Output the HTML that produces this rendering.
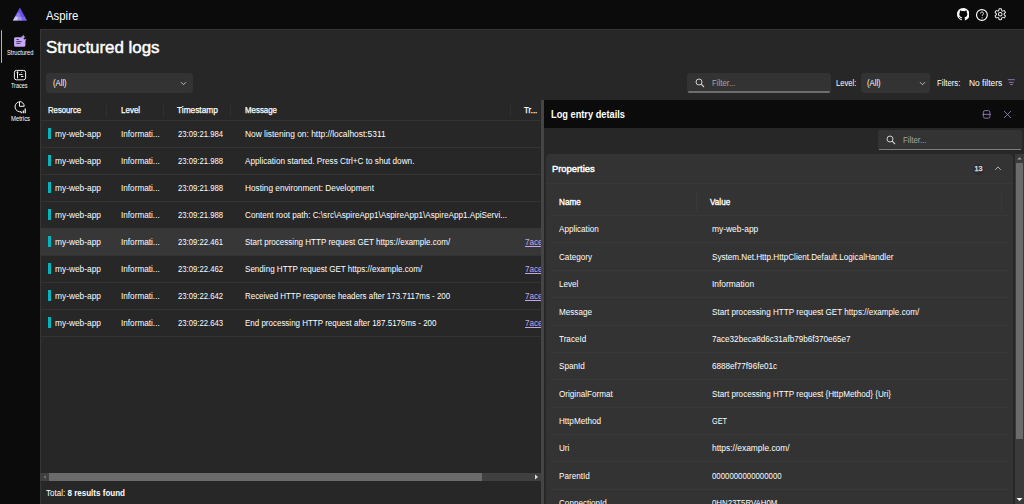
<!DOCTYPE html>
<html><head><meta charset="utf-8"><style>
html,body{margin:0;padding:0;}
body{width:1024px;height:504px;overflow:hidden;position:relative;background:#272727;font-family:"Liberation Sans",sans-serif;}
.r{position:absolute;}
.t{position:absolute;white-space:nowrap;}
</style></head><body>
<div class="r" style="left:0px;top:0px;width:1024px;height:29px;background:#0b0b0b;"></div>
<div class="r" style="left:0px;top:29px;width:40px;height:475px;background:#0b0b0b;"></div>
<div class="r" style="left:40px;top:29px;width:984px;height:475px;background:#272727;box-sizing:border-box;border-top:1px solid #363636;border-left:1px solid #363636"></div>
<svg class="r" style="left:12px;top:7px" width="16" height="15" viewBox="0 0 16 15"><polygon points="7.90,0.80 10.67,5.90 5.13,5.90" fill="#6a4ef2" stroke="#6a4ef2" stroke-width="0.3" stroke-linejoin="round"/><polygon points="5.13,5.90 7.90,5.90 9.46,9.40 3.23,9.40" fill="#8f78f3" stroke="#8f78f3" stroke-width="0.3" stroke-linejoin="round"/><polygon points="7.90,5.90 10.67,5.90 12.57,9.40 9.46,9.40" fill="#6c52f0" stroke="#6c52f0" stroke-width="0.3" stroke-linejoin="round"/><polygon points="3.23,9.40 6.34,9.40 5.60,13.50 1.00,13.50" fill="#d2c6fb" stroke="#d2c6fb" stroke-width="0.3" stroke-linejoin="round"/><polygon points="6.34,9.40 9.46,9.40 10.20,13.50 5.60,13.50" fill="#a592f5" stroke="#a592f5" stroke-width="0.3" stroke-linejoin="round"/><polygon points="9.46,9.40 12.57,9.40 14.80,13.50 10.20,13.50" fill="#7b63f1" stroke="#7b63f1" stroke-width="0.3" stroke-linejoin="round"/></svg>
<div class="t" style="left:46.40px;top:9.50px;font-size:12.4px;line-height:12.4px;color:#ffffff;font-weight:400;transform:scaleX(0.9188);transform-origin:0 0;">Aspire</div>
<svg class="r" style="left:956.6px;top:8.4px" width="12.6" height="12.6" viewBox="0 0 16 16"><path fill="#fff" d="M8 0C3.58 0 0 3.58 0 8c0 3.54 2.29 6.53 5.47 7.59.4.07.55-.17.55-.38 0-.19-.01-.82-.01-1.49-2.01.37-2.53-.49-2.69-.94-.09-.23-.48-.94-.82-1.13-.28-.15-.68-.52-.01-.53.63-.01 1.08.58 1.23.82.72 1.21 1.87.87 2.33.66.07-.52.28-.87.51-1.07-1.78-.2-3.640-.89-3.64-3.95 0-.87.31-1.590.82-2.15-.08-.2-.36-1.02.08-2.12 0 0 .67-.21 2.2.82.64-.18 1.32-.27 2-.27.68 0 1.36.09 2 .27 1.53-1.04 2.2-.82 2.2-.82.44 1.1.16 1.92.08 2.12.51.56.82 1.27.82 2.15 0 3.07-1.87 3.75-3.65 3.95.29.25.54.73.54 1.48 0 1.07-.01 1.93-.01 2.2 0 .21.15.46.55.38A8.013 8.013 0 0016 8c0-4.42-3.58-8-8-8z"/></svg>
<svg class="r" style="left:975px;top:7.8px" width="14" height="14" viewBox="0 0 14 14"><circle cx="6.9" cy="7" r="5.4" fill="none" stroke="#fff" stroke-width="1.15"/><path d="M5.5 5.5c0-.9.7-1.5 1.5-1.5s1.5.6 1.5 1.5c0 1-1.3 1.1-1.3 2.3" fill="none" stroke="#fff" stroke-width="0.9"/><circle cx="7.15" cy="9.8" r=".6" fill="#fff"/></svg>
<svg class="r" style="left:993.3px;top:7.4px" width="14.5" height="14.5" viewBox="0 0 24 24"><path fill="#fff" d="M12.012 2.25c.734.008 1.465.093 2.182.253a.75.75 0 0 1 .582.649l.17 1.527a1.384 1.384 0 0 0 1.927 1.116l1.401-.615a.75.75 0 0 1 .85.174 9.792 9.792 0 0 1 2.204 3.792.75.75 0 0 1-.271.825l-1.242.916a1.381 1.381 0 0 0 0 2.226l1.243.915a.75.75 0 0 1 .272.826 9.797 9.797 0 0 1-2.204 3.792.75.75 0 0 1-.848.175l-1.407-.617a1.38 1.38 0 0 0-1.926 1.114l-.169 1.526a.75.75 0 0 1-.572.647 9.518 9.518 0 0 1-4.406 0 .75.75 0 0 1-.572-.647l-.168-1.524a1.382 1.382 0 0 0-1.926-1.11l-1.406.616a.75.75 0 0 1-.849-.175 9.798 9.798 0 0 1-2.204-3.796.75.75 0 0 1 .272-.826l1.243-.916a1.38 1.38 0 0 0 0-2.226l-1.243-.914a.75.75 0 0 1-.271-.826 9.793 9.793 0 0 1 2.204-3.792.75.75 0 0 1 .85-.174l1.4.615a1.387 1.387 0 0 0 1.93-1.118l.17-1.526a.75.75 0 0 1 .583-.65c.717-.159 1.45-.243 2.201-.252Zm0 1.5a9.135 9.135 0 0 0-1.354.117l-.109.977A2.886 2.886 0 0 1 6.525 7.17l-.898-.394a8.293 8.293 0 0 0-1.348 2.317l.798.587a2.881 2.881 0 0 1 0 4.643l-.799.588c.32.842.776 1.626 1.348 2.322l.905-.397a2.882 2.882 0 0 1 4.017 2.318l.11.984c.889.15 1.798.15 2.687 0l.11-.984a2.881 2.881 0 0 1 4.018-2.322l.905.396a8.296 8.296 0 0 0 1.347-2.318l-.798-.588a2.881 2.881 0 0 1 0-4.643l.796-.587a8.293 8.293 0 0 0-1.348-2.317l-.896.393a2.884 2.884 0 0 1-4.023-2.324l-.11-.976a8.988 8.988 0 0 0-1.333-.117ZM12 8.25a3.75 3.75 0 1 1 0 7.5 3.75 3.75 0 0 1 0-7.5Zm0 1.5a2.25 2.25 0 1 0 0 4.5 2.25 2.25 0 0 0 0-4.5Z"/></svg>
<div class="r" style="left:1px;top:29.5px;width:1.4px;height:33.2px;background:#c2a2f0;border-radius:1px"></div>
<svg class="r" style="left:13px;top:34px" width="14" height="14" viewBox="0 0 14 14">
<path d="M2.6 3.2h6.3l3.5 3.4v4.6c0 .9-.6 1.5-1.5 1.5H2.6c-.9 0-1.5-.6-1.5-1.5V4.7c0-.9.6-1.5 1.5-1.5z" fill="#c7a6f5"/>
<path d="M3.4 5.5h2.6M3.4 7.6h5.3M3.4 9.4h3.9" stroke="#3b2f52" stroke-width="0.9"/>
<path d="M10.2 0.6l.65 1.75 1.75.65-1.75.65-.65 1.75-.65-1.75-1.75-.65 1.75-.65z" fill="#c7a6f5"/>
<path d="M12.2 4.4l.4 1 1 .4-1 .4-.4 1-.4-1-1-.4 1-.4z" fill="#c7a6f5"/>
</svg>
<div class="t" style="left:6.80px;top:50.41px;font-size:6.6px;line-height:6.6px;color:#ffffff;font-weight:400;transform:scaleX(0.8671);transform-origin:0 0;">Structured</div>
<svg class="r" style="left:13px;top:69px" width="14" height="12" viewBox="0 0 14 12">
<rect x="1.4" y="1.4" width="11.2" height="9.4" rx="2" fill="none" stroke="#fff" stroke-width="0.95"/>
<path d="M4.5 2.6v6.8M6 5.6h3.6M8 7.5h2.4M8.6 3.2v.6" stroke="#fff" stroke-width="0.95" fill="none"/>
<circle cx="4.5" cy="3.4" r="0.9" fill="#fff"/>
</svg>
<div class="t" style="left:11.40px;top:83.21px;font-size:6.6px;line-height:6.6px;color:#ffffff;font-weight:400;transform:scaleX(0.8231);transform-origin:0 0;">Traces</div>
<svg class="r" style="left:13px;top:100px" width="14" height="14" viewBox="0 0 14 14">
<path d="M5.8 1.9A4.9 4.9 0 1 0 8.3 11.6" fill="none" stroke="#fff" stroke-width="0.95"/>
<path d="M6.5 1.5v4.8h4.7A4.8 4.8 0 0 0 6.5 1.5z" fill="none" stroke="#fff" stroke-width="0.95"/>
<path d="M8.3 13.2v-1.2M10.3 13.2v-2.6M12.2 13.2v-4.6" stroke="#fff" stroke-width="1.2"/>
</svg>
<div class="t" style="left:10.50px;top:116.41px;font-size:6.6px;line-height:6.6px;color:#ffffff;font-weight:400;transform:scaleX(0.8982);transform-origin:0 0;">Metrics</div>
<div class="t" style="left:46.40px;top:39.02px;font-size:16.4px;line-height:16.4px;color:#ffffff;font-weight:400;transform:scaleX(1.0299);transform-origin:0 0;-webkit-text-stroke:0.46px #ffffff;">Structured logs</div>
<div class="r" style="left:46px;top:73px;width:147px;height:20px;background:#333333;border-radius:3px"></div>
<div class="t" style="left:52.60px;top:78.80px;font-size:8.5px;line-height:8.5px;color:#ffffff;font-weight:400;transform:scaleX(0.9037);transform-origin:0 0;">(All)</div>
<svg class="r" style="left:180px;top:80.5px" width="7" height="5" viewBox="0 0 7 5"><path d="M1 1.2l2.5 2.5L6 1.2" fill="none" stroke="#ccc" stroke-width="0.9"/></svg>
<div class="r" style="left:687px;top:73px;width:144px;height:20px;background:#333333;border-radius:3px"></div>
<div class="r" style="left:688px;top:91px;width:142px;height:1.6px;background:#6e6e6e;border-radius:1px"></div>
<svg class="r" style="left:695px;top:78px" width="10" height="10" viewBox="0 0 10 10"><circle cx="4" cy="4" r="3" fill="none" stroke="#d0d0d0" stroke-width="1"/><path d="M6.2 6.2L9 9" stroke="#d0d0d0" stroke-width="1.1"/></svg>
<div class="t" style="left:711.50px;top:78.60px;font-size:8.5px;line-height:8.5px;color:#a6a6a6;font-weight:400;transform:scaleX(0.9173);transform-origin:0 0;">Filter...</div>
<div class="t" style="left:835.70px;top:78.80px;font-size:8.5px;line-height:8.5px;color:#ffffff;font-weight:400;transform:scaleX(0.8951);transform-origin:0 0;">Level:</div>
<div class="r" style="left:861px;top:73px;width:69px;height:20px;background:#333333;border-radius:3px"></div>
<div class="t" style="left:867.00px;top:78.80px;font-size:8.5px;line-height:8.5px;color:#ffffff;font-weight:400;transform:scaleX(0.9037);transform-origin:0 0;">(All)</div>
<svg class="r" style="left:919px;top:80.5px" width="7" height="5" viewBox="0 0 7 5"><path d="M1 1.2l2.5 2.5L6 1.2" fill="none" stroke="#ccc" stroke-width="0.9"/></svg>
<div class="t" style="left:936.60px;top:78.80px;font-size:8.5px;line-height:8.5px;color:#ffffff;font-weight:400;transform:scaleX(0.9176);transform-origin:0 0;">Filters:</div>
<div class="t" style="left:968.70px;top:78.80px;font-size:8.5px;line-height:8.5px;color:#ffffff;font-weight:400;transform:scaleX(0.9901);transform-origin:0 0;">No filters</div>
<svg class="r" style="left:1007px;top:78px" width="9" height="8" viewBox="0 0 9 8"><path d="M0.8 1.65h7M1.9 4.4h4.8M3 6.5h2.9" stroke="#8c75ad" stroke-width="0.95"/></svg>
<div class="t" style="left:48.20px;top:106.17px;font-size:8.9px;line-height:8.9px;color:#ffffff;font-weight:400;transform:scaleX(0.8716);transform-origin:0 0;-webkit-text-stroke:0.25px #ffffff;">Resource</div>
<div class="t" style="left:120.80px;top:106.17px;font-size:8.9px;line-height:8.9px;color:#ffffff;font-weight:400;transform:scaleX(0.9000);transform-origin:0 0;-webkit-text-stroke:0.25px #ffffff;">Level</div>
<div class="t" style="left:177.10px;top:106.17px;font-size:8.9px;line-height:8.9px;color:#ffffff;font-weight:400;transform:scaleX(0.9386);transform-origin:0 0;-webkit-text-stroke:0.25px #ffffff;">Timestamp</div>
<div class="t" style="left:244.80px;top:106.17px;font-size:8.9px;line-height:8.9px;color:#ffffff;font-weight:400;transform:scaleX(0.8888);transform-origin:0 0;-webkit-text-stroke:0.25px #ffffff;">Message</div>
<div class="t" style="left:523.70px;top:106.17px;font-size:8.9px;line-height:8.9px;color:#ffffff;font-weight:400;transform:scaleX(0.8869);transform-origin:0 0;-webkit-text-stroke:0.25px #ffffff;">Tr...</div>
<div class="r" style="left:106px;top:105px;width:1px;height:12px;background:#303030;"></div>
<div class="r" style="left:163px;top:105px;width:1px;height:12px;background:#303030;"></div>
<div class="r" style="left:230px;top:105px;width:1px;height:12px;background:#303030;"></div>
<div class="r" style="left:510px;top:105px;width:1px;height:12px;background:#303030;"></div>
<div class="r" style="left:40px;top:120px;width:501px;height:1px;background:#333333;"></div>
<div class="r" style="left:40px;top:147px;width:501px;height:1px;background:#333333;"></div>
<div class="r" style="left:48px;top:128px;width:3px;height:11px;background:#00b5bd;"></div>
<div class="t" style="left:54.60px;top:130.10px;font-size:8.5px;line-height:8.5px;color:#ffffff;font-weight:400;transform:scaleX(0.9836);transform-origin:0 0;">my-web-app</div>
<div class="t" style="left:120.80px;top:130.10px;font-size:8.5px;line-height:8.5px;color:#ffffff;font-weight:400;transform:scaleX(0.9638);transform-origin:0 0;">Informati...</div>
<div class="t" style="left:177.50px;top:130.10px;font-size:8.5px;line-height:8.5px;color:#ffffff;font-weight:400;transform:scaleX(0.9067);transform-origin:0 0;">23:09:21.984</div>
<div class="t" style="left:245.00px;top:130.10px;font-size:8.5px;line-height:8.5px;color:#ffffff;font-weight:400;transform:scaleX(0.9864);transform-origin:0 0;">Now listening on: http://localhost:5311</div>
<div class="r" style="left:40px;top:174px;width:501px;height:1px;background:#333333;"></div>
<div class="r" style="left:48px;top:155px;width:3px;height:11px;background:#00b5bd;"></div>
<div class="t" style="left:54.60px;top:157.10px;font-size:8.5px;line-height:8.5px;color:#ffffff;font-weight:400;transform:scaleX(0.9836);transform-origin:0 0;">my-web-app</div>
<div class="t" style="left:120.80px;top:157.10px;font-size:8.5px;line-height:8.5px;color:#ffffff;font-weight:400;transform:scaleX(0.9638);transform-origin:0 0;">Informati...</div>
<div class="t" style="left:177.50px;top:157.10px;font-size:8.5px;line-height:8.5px;color:#ffffff;font-weight:400;transform:scaleX(0.9067);transform-origin:0 0;">23:09:21.988</div>
<div class="t" style="left:245.00px;top:157.10px;font-size:8.5px;line-height:8.5px;color:#ffffff;font-weight:400;transform:scaleX(0.9626);transform-origin:0 0;">Application started. Press Ctrl+C to shut down.</div>
<div class="r" style="left:40px;top:201px;width:501px;height:1px;background:#333333;"></div>
<div class="r" style="left:48px;top:182px;width:3px;height:11px;background:#00b5bd;"></div>
<div class="t" style="left:54.60px;top:184.10px;font-size:8.5px;line-height:8.5px;color:#ffffff;font-weight:400;transform:scaleX(0.9836);transform-origin:0 0;">my-web-app</div>
<div class="t" style="left:120.80px;top:184.10px;font-size:8.5px;line-height:8.5px;color:#ffffff;font-weight:400;transform:scaleX(0.9638);transform-origin:0 0;">Informati...</div>
<div class="t" style="left:177.50px;top:184.10px;font-size:8.5px;line-height:8.5px;color:#ffffff;font-weight:400;transform:scaleX(0.9067);transform-origin:0 0;">23:09:21.988</div>
<div class="t" style="left:245.00px;top:184.10px;font-size:8.5px;line-height:8.5px;color:#ffffff;font-weight:400;transform:scaleX(0.9717);transform-origin:0 0;">Hosting environment: Development</div>
<div class="r" style="left:40px;top:228px;width:501px;height:1px;background:#333333;"></div>
<div class="r" style="left:48px;top:209px;width:3px;height:11px;background:#00b5bd;"></div>
<div class="t" style="left:54.60px;top:211.10px;font-size:8.5px;line-height:8.5px;color:#ffffff;font-weight:400;transform:scaleX(0.9836);transform-origin:0 0;">my-web-app</div>
<div class="t" style="left:120.80px;top:211.10px;font-size:8.5px;line-height:8.5px;color:#ffffff;font-weight:400;transform:scaleX(0.9638);transform-origin:0 0;">Informati...</div>
<div class="t" style="left:177.50px;top:211.10px;font-size:8.5px;line-height:8.5px;color:#ffffff;font-weight:400;transform:scaleX(0.9067);transform-origin:0 0;">23:09:21.988</div>
<div class="t" style="left:245.00px;top:211.10px;font-size:8.5px;line-height:8.5px;color:#ffffff;font-weight:400;transform:scaleX(0.9611);transform-origin:0 0;">Content root path: C:\src\AspireApp1\AspireApp1\AspireApp1.ApiServi...</div>
<div class="r" style="left:40px;top:228px;width:501px;height:27px;background:#373737;"></div>
<div class="r" style="left:40px;top:255px;width:501px;height:1px;background:#333333;"></div>
<div class="r" style="left:48px;top:236px;width:3px;height:11px;background:#00b5bd;"></div>
<div class="t" style="left:54.60px;top:238.10px;font-size:8.5px;line-height:8.5px;color:#ffffff;font-weight:400;transform:scaleX(0.9836);transform-origin:0 0;">my-web-app</div>
<div class="t" style="left:120.80px;top:238.10px;font-size:8.5px;line-height:8.5px;color:#ffffff;font-weight:400;transform:scaleX(0.9638);transform-origin:0 0;">Informati...</div>
<div class="t" style="left:177.50px;top:238.10px;font-size:8.5px;line-height:8.5px;color:#ffffff;font-weight:400;transform:scaleX(0.9067);transform-origin:0 0;">23:09:22.461</div>
<div class="t" style="left:245.00px;top:238.10px;font-size:8.5px;line-height:8.5px;color:#ffffff;font-weight:400;transform:scaleX(0.9456);transform-origin:0 0;">Start processing HTTP request GET https://example.com/</div>
<div class="r" style="left:520px;top:231px;width:21px;height:22px;overflow:hidden"><div class="t" style="left:4.70px;top:7.10px;font-size:8.5px;line-height:8.5px;color:#c3a5ec;font-weight:400;transform:scaleX(0.9500);transform-origin:0 0;text-decoration:underline;">7ace32beca8d6c31afb79b6f370e65e7</div></div>
<div class="r" style="left:40px;top:282px;width:501px;height:1px;background:#333333;"></div>
<div class="r" style="left:48px;top:263px;width:3px;height:11px;background:#00b5bd;"></div>
<div class="t" style="left:54.60px;top:265.10px;font-size:8.5px;line-height:8.5px;color:#ffffff;font-weight:400;transform:scaleX(0.9836);transform-origin:0 0;">my-web-app</div>
<div class="t" style="left:120.80px;top:265.10px;font-size:8.5px;line-height:8.5px;color:#ffffff;font-weight:400;transform:scaleX(0.9638);transform-origin:0 0;">Informati...</div>
<div class="t" style="left:177.50px;top:265.10px;font-size:8.5px;line-height:8.5px;color:#ffffff;font-weight:400;transform:scaleX(0.9067);transform-origin:0 0;">23:09:22.462</div>
<div class="t" style="left:245.00px;top:265.10px;font-size:8.5px;line-height:8.5px;color:#ffffff;font-weight:400;transform:scaleX(0.9493);transform-origin:0 0;">Sending HTTP request GET https://example.com/</div>
<div class="r" style="left:520px;top:258px;width:21px;height:22px;overflow:hidden"><div class="t" style="left:4.70px;top:7.10px;font-size:8.5px;line-height:8.5px;color:#c3a5ec;font-weight:400;transform:scaleX(0.9500);transform-origin:0 0;text-decoration:underline;">7ace32beca8d6c31afb79b6f370e65e7</div></div>
<div class="r" style="left:40px;top:309px;width:501px;height:1px;background:#333333;"></div>
<div class="r" style="left:48px;top:290px;width:3px;height:11px;background:#00b5bd;"></div>
<div class="t" style="left:54.60px;top:292.10px;font-size:8.5px;line-height:8.5px;color:#ffffff;font-weight:400;transform:scaleX(0.9836);transform-origin:0 0;">my-web-app</div>
<div class="t" style="left:120.80px;top:292.10px;font-size:8.5px;line-height:8.5px;color:#ffffff;font-weight:400;transform:scaleX(0.9638);transform-origin:0 0;">Informati...</div>
<div class="t" style="left:177.50px;top:292.10px;font-size:8.5px;line-height:8.5px;color:#ffffff;font-weight:400;transform:scaleX(0.9067);transform-origin:0 0;">23:09:22.642</div>
<div class="t" style="left:245.00px;top:292.10px;font-size:8.5px;line-height:8.5px;color:#ffffff;font-weight:400;transform:scaleX(0.9333);transform-origin:0 0;">Received HTTP response headers after 173.7117ms - 200</div>
<div class="r" style="left:520px;top:285px;width:21px;height:22px;overflow:hidden"><div class="t" style="left:4.70px;top:7.10px;font-size:8.5px;line-height:8.5px;color:#c3a5ec;font-weight:400;transform:scaleX(0.9500);transform-origin:0 0;text-decoration:underline;">7ace32beca8d6c31afb79b6f370e65e7</div></div>
<div class="r" style="left:40px;top:336px;width:501px;height:1px;background:#333333;"></div>
<div class="r" style="left:48px;top:317px;width:3px;height:11px;background:#00b5bd;"></div>
<div class="t" style="left:54.60px;top:319.10px;font-size:8.5px;line-height:8.5px;color:#ffffff;font-weight:400;transform:scaleX(0.9836);transform-origin:0 0;">my-web-app</div>
<div class="t" style="left:120.80px;top:319.10px;font-size:8.5px;line-height:8.5px;color:#ffffff;font-weight:400;transform:scaleX(0.9638);transform-origin:0 0;">Informati...</div>
<div class="t" style="left:177.50px;top:319.10px;font-size:8.5px;line-height:8.5px;color:#ffffff;font-weight:400;transform:scaleX(0.9067);transform-origin:0 0;">23:09:22.643</div>
<div class="t" style="left:245.00px;top:319.10px;font-size:8.5px;line-height:8.5px;color:#ffffff;font-weight:400;transform:scaleX(0.9389);transform-origin:0 0;">End processing HTTP request after 187.5176ms - 200</div>
<div class="r" style="left:520px;top:312px;width:21px;height:22px;overflow:hidden"><div class="t" style="left:4.70px;top:7.10px;font-size:8.5px;line-height:8.5px;color:#c3a5ec;font-weight:400;transform:scaleX(0.9500);transform-origin:0 0;text-decoration:underline;">7ace32beca8d6c31afb79b6f370e65e7</div></div>
<div class="r" style="left:40px;top:473px;width:501px;height:8px;background:#404040;"></div>
<div class="r" style="left:49px;top:473px;width:433px;height:8px;background:#6b6b6b;"></div>
<svg class="r" style="left:42px;top:474px" width="5" height="6" viewBox="0 0 5 6"><path d="M3.8 1.2v3.6L1.6 3z" fill="#7a7a7a"/></svg>
<svg class="r" style="left:534px;top:474px" width="5" height="6" viewBox="0 0 5 6"><path d="M1 0.5v5L4 3z" fill="#e0e0e0"/></svg>
<div class="t" style="left:46.25px;top:489.20px;font-size:8.5px;line-height:8.5px;color:#ffffff;font-weight:400;transform:scaleX(0.9450);transform-origin:0 0;">Total: <b>8 results found</b></div>
<div class="r" style="left:541px;top:100px;width:3px;height:404px;background:#454545;"></div>
<div class="r" style="left:544px;top:100px;width:480px;height:28px;background:#0b0b0b;"></div>
<div class="r" style="left:544px;top:128px;width:480px;height:376px;background:#272727;"></div>
<div class="t" style="left:550.90px;top:109.80px;font-size:10.4px;line-height:10.4px;color:#ffffff;font-weight:700;transform:scaleX(0.8892);transform-origin:0 0;">Log entry details</div>
<svg class="r" style="left:982px;top:109px" width="10" height="11" viewBox="0 0 10 11"><rect x="1.4" y="1.6" width="6.5" height="7.6" rx="1.6" fill="none" stroke="#967fbf" stroke-width="0.85"/><path d="M0.4 5.4h8.6" stroke="#967fbf" stroke-width="0.85"/></svg>
<svg class="r" style="left:1003px;top:110px" width="9" height="9" viewBox="0 0 9 9"><path d="M1 1l7 7M8 1l-7 7" stroke="#a68bd0" stroke-width="0.8"/></svg>
<div class="r" style="left:878px;top:130px;width:144px;height:20px;background:#333333;border-radius:3px"></div>
<div class="r" style="left:879px;top:149px;width:142px;height:1px;background:#7d7d7d;"></div>
<svg class="r" style="left:886px;top:135px" width="10" height="10" viewBox="0 0 10 10"><circle cx="4" cy="4" r="3" fill="none" stroke="#d0d0d0" stroke-width="1"/><path d="M6.2 6.2L9 9" stroke="#d0d0d0" stroke-width="1.1"/></svg>
<div class="t" style="left:902.60px;top:136.10px;font-size:8.5px;line-height:8.5px;color:#a6a6a6;font-weight:400;transform:scaleX(0.9173);transform-origin:0 0;">Filter...</div>
<div class="r" style="left:546px;top:154px;width:467px;height:360px;background:#333333;border-radius:4px"></div>
<div class="t" style="left:551.80px;top:164.12px;font-size:9.9px;line-height:9.9px;color:#ffffff;font-weight:400;transform:scaleX(0.9463);transform-origin:0 0;-webkit-text-stroke:0.45px #ffffff;">Properties</div>
<div class="r" style="left:973px;top:164.3px;width:10.5px;height:10.5px;background:#2c2c2c;border-radius:6px"></div>
<div class="t" style="left:974.40px;top:165.21px;font-size:7.2px;line-height:7.2px;color:#e6ecf5;font-weight:400;-webkit-text-stroke:0.25px #e6ecf5;letter-spacing:0.05px">13</div>
<svg class="r" style="left:994px;top:165px" width="8" height="6" viewBox="0 0 8 6"><path d="M1.2 4.9L4 1.9l2.8 3" fill="none" stroke="#cfcfcf" stroke-width="0.8"/></svg>
<div class="r" style="left:546px;top:183px;width:467px;height:1px;background:#383838;"></div>
<div class="t" style="left:558.50px;top:197.60px;font-size:8.5px;line-height:8.5px;color:#ffffff;font-weight:400;transform:scaleX(0.9657);transform-origin:0 0;-webkit-text-stroke:0.34px #ffffff;">Name</div>
<div class="t" style="left:710.20px;top:197.60px;font-size:8.5px;line-height:8.5px;color:#ffffff;font-weight:400;transform:scaleX(0.9571);transform-origin:0 0;-webkit-text-stroke:0.34px #ffffff;">Value</div>
<div class="r" style="left:696px;top:192px;width:1px;height:19px;background:#393939;"></div>
<div class="r" style="left:1001px;top:192px;width:1px;height:19px;background:#393939;"></div>
<div class="r" style="left:551px;top:215px;width:457px;height:1px;background:#393939;"></div>
<div class="t" style="left:559.20px;top:224.55px;font-size:8.5px;line-height:8.5px;color:#ffffff;font-weight:400;transform:scaleX(0.9550);transform-origin:0 0;">Application</div>
<div class="t" style="left:711.50px;top:224.55px;font-size:8.5px;line-height:8.5px;color:#ffffff;font-weight:400;transform:scaleX(0.9900);transform-origin:0 0;">my-web-app</div>
<div class="r" style="left:551px;top:242px;width:457px;height:1px;background:#393939;"></div>
<div class="t" style="left:559.20px;top:252.55px;font-size:8.5px;line-height:8.5px;color:#ffffff;font-weight:400;transform:scaleX(0.9550);transform-origin:0 0;">Category</div>
<div class="t" style="left:711.50px;top:252.55px;font-size:8.5px;line-height:8.5px;color:#ffffff;font-weight:400;transform:scaleX(0.9550);transform-origin:0 0;">System.Net.Http.HttpClient.Default.LogicalHandler</div>
<div class="r" style="left:551px;top:270px;width:457px;height:1px;background:#393939;"></div>
<div class="t" style="left:559.20px;top:279.55px;font-size:8.5px;line-height:8.5px;color:#ffffff;font-weight:400;transform:scaleX(0.9550);transform-origin:0 0;">Level</div>
<div class="t" style="left:711.50px;top:279.55px;font-size:8.5px;line-height:8.5px;color:#ffffff;font-weight:400;transform:scaleX(0.9900);transform-origin:0 0;">Information</div>
<div class="r" style="left:551px;top:297px;width:457px;height:1px;background:#393939;"></div>
<div class="t" style="left:559.20px;top:307.55px;font-size:8.5px;line-height:8.5px;color:#ffffff;font-weight:400;transform:scaleX(0.9550);transform-origin:0 0;">Message</div>
<div class="t" style="left:711.50px;top:307.55px;font-size:8.5px;line-height:8.5px;color:#ffffff;font-weight:400;transform:scaleX(0.9550);transform-origin:0 0;">Start processing HTTP request GET https://example.com/</div>
<div class="r" style="left:551px;top:325px;width:457px;height:1px;background:#393939;"></div>
<div class="t" style="left:559.20px;top:334.55px;font-size:8.5px;line-height:8.5px;color:#ffffff;font-weight:400;transform:scaleX(0.9550);transform-origin:0 0;">TraceId</div>
<div class="t" style="left:711.50px;top:334.55px;font-size:8.5px;line-height:8.5px;color:#ffffff;font-weight:400;transform:scaleX(0.9550);transform-origin:0 0;">7ace32beca8d6c31afb79b6f370e65e7</div>
<div class="r" style="left:551px;top:352px;width:457px;height:1px;background:#393939;"></div>
<div class="t" style="left:559.20px;top:361.55px;font-size:8.5px;line-height:8.5px;color:#ffffff;font-weight:400;transform:scaleX(0.9550);transform-origin:0 0;">SpanId</div>
<div class="t" style="left:711.50px;top:361.55px;font-size:8.5px;line-height:8.5px;color:#ffffff;font-weight:400;transform:scaleX(0.9550);transform-origin:0 0;">6888ef77f96fe01c</div>
<div class="r" style="left:551px;top:379px;width:457px;height:1px;background:#393939;"></div>
<div class="t" style="left:559.20px;top:389.55px;font-size:8.5px;line-height:8.5px;color:#ffffff;font-weight:400;transform:scaleX(0.9550);transform-origin:0 0;">OriginalFormat</div>
<div class="t" style="left:711.50px;top:389.55px;font-size:8.5px;line-height:8.5px;color:#ffffff;font-weight:400;transform:scaleX(0.9550);transform-origin:0 0;">Start processing HTTP request {HttpMethod} {Uri}</div>
<div class="r" style="left:551px;top:407px;width:457px;height:1px;background:#393939;"></div>
<div class="t" style="left:559.20px;top:416.55px;font-size:8.5px;line-height:8.5px;color:#ffffff;font-weight:400;transform:scaleX(0.9550);transform-origin:0 0;">HttpMethod</div>
<div class="t" style="left:711.50px;top:416.55px;font-size:8.5px;line-height:8.5px;color:#ffffff;font-weight:400;transform:scaleX(0.8600);transform-origin:0 0;">GET</div>
<div class="r" style="left:551px;top:434px;width:457px;height:1px;background:#393939;"></div>
<div class="t" style="left:559.20px;top:443.55px;font-size:8.5px;line-height:8.5px;color:#ffffff;font-weight:400;transform:scaleX(0.9550);transform-origin:0 0;">Uri</div>
<div class="t" style="left:711.50px;top:443.55px;font-size:8.5px;line-height:8.5px;color:#ffffff;font-weight:400;transform:scaleX(0.9900);transform-origin:0 0;">https://example.com/</div>
<div class="r" style="left:551px;top:461px;width:457px;height:1px;background:#393939;"></div>
<div class="t" style="left:559.20px;top:471.55px;font-size:8.5px;line-height:8.5px;color:#ffffff;font-weight:400;transform:scaleX(0.9550);transform-origin:0 0;">ParentId</div>
<div class="t" style="left:711.50px;top:471.55px;font-size:8.5px;line-height:8.5px;color:#ffffff;font-weight:400;transform:scaleX(0.9200);transform-origin:0 0;">0000000000000000</div>
<div class="r" style="left:551px;top:489px;width:457px;height:1px;background:#393939;"></div>
<div class="t" style="left:559.20px;top:498.55px;font-size:8.5px;line-height:8.5px;color:#ffffff;font-weight:400;transform:scaleX(0.9550);transform-origin:0 0;">ConnectionId</div>
<div class="t" style="left:711.50px;top:498.55px;font-size:8.5px;line-height:8.5px;color:#ffffff;font-weight:400;transform:scaleX(0.9200);transform-origin:0 0;">0HN23T5RVAH0M</div>
<div class="r" style="left:551px;top:516px;width:457px;height:1px;background:#393939;"></div>
<div class="r" style="left:1015px;top:154px;width:9px;height:350px;background:#3a3a3a;"></div>
<div class="r" style="left:1016px;top:163px;width:7px;height:276px;background:#6b6b6b;"></div>
<svg class="r" style="left:1016px;top:156px" width="7" height="5" viewBox="0 0 7 5"><path d="M1.2 3.6h4.6L3.5 1.3z" fill="#a0a0a0"/></svg>
<svg class="r" style="left:1016px;top:497px" width="7" height="5" viewBox="0 0 7 5"><path d="M0.5 1h6L3.5 4z" fill="#ffffff"/></svg>
</body></html>
